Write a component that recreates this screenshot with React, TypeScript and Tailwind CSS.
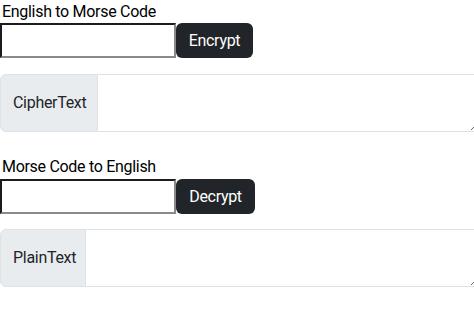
export default function App() {
  return (
    <div className="w-[474px] h-[323px] overflow-hidden bg-white text-[#212529] tracking-[-0.3px] font-['Roboto',Arial,sans-serif]">
      <div className="h-[23px] pl-[2px] text-[16px] leading-[23px] text-black">English to Morse Code</div>
      <div className="flex">
        <input className="h-[35px] w-[176px] border-2 border-t-[#1c1c1c] border-l-[#1c1c1c] border-r-[#8a8a8a] border-b-[#8a8a8a] bg-white outline-none" />
        <button className="h-[35px] w-[77px] rounded-[6px] bg-[#212529] text-[16px] text-white">Encrypt</button>
      </div>
      <div className="mt-4 flex h-[58px] w-[480px]">
        <span className="flex w-[98px] items-center rounded-l-[6px] border border-[#dee2e6] bg-[#e9ecef] px-3 text-[16px]">
          CipherText
        </span>
        <textarea className="flex-1 -ml-px rounded-r-[6px] border border-[#dee2e6] bg-white outline-none" />
      </div>
      <div className="mt-[23px] h-[24px] pl-[2px] text-[16px] leading-[24px] text-black">Morse Code to English</div>
      <div className="flex">
        <input className="h-[35px] w-[176px] border-2 border-t-[#1c1c1c] border-l-[#1c1c1c] border-r-[#8a8a8a] border-b-[#8a8a8a] bg-white outline-none" />
        <button className="h-[35px] w-[79px] rounded-[6px] bg-[#212529] text-[16px] text-white">Decrypt</button>
      </div>
      <div className="mt-[15px] flex h-[58px] w-[480px]">
        <span className="flex w-[86px] items-center rounded-l-[6px] border border-[#dee2e6] bg-[#e9ecef] px-3 text-[16px]">
          PlainText
        </span>
        <textarea className="flex-1 -ml-px rounded-r-[6px] border border-[#dee2e6] bg-white outline-none" />
      </div>
    </div>
  );
}
